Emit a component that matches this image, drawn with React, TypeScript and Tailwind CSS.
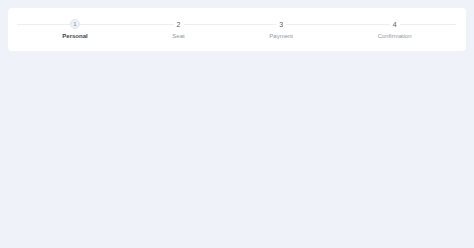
import React from "react";

const steps = ["Personal", "Seat", "Payment", "Confirmation"];

export default function App() {
  return (
    <div className="min-h-[248px] w-full bg-[#eff2f8] p-2" style={{ fontFamily: '"Liberation Sans", Arial, sans-serif' }}>
      <div className="rounded-[4px] bg-white px-3 pt-[11px] pb-[11px]">
        <div className="relative flex">
          <div className="absolute left-[-3px] right-[-2px] top-[5px] h-px bg-[#eceef3]" />
          {steps.map((s, i) => (
            <div key={s} className="relative flex flex-auto flex-col items-center">
              <div
                className={
                  i === 0
                    ? "flex h-[10px] w-[10px] items-center justify-center rounded-full border border-[#e1e5ee] bg-[#eef1f7] text-[6px] leading-none text-[#8a8f99]"
                    : "flex h-[10px] w-[10px] items-center justify-center bg-white text-[7px] leading-none text-[#5a5e66]"
                }
              >
                {i + 1}
              </div>
              <div
                className={
                  i === 0
                    ? "mt-[3px] text-[6px] font-bold leading-[8px] text-[#3f424a]"
                    : "mt-[3px] text-[6px] leading-[8px] text-[#92969e]"
                }
              >
                {s}
              </div>
            </div>
          ))}
        </div>
      </div>
    </div>
  );
}
